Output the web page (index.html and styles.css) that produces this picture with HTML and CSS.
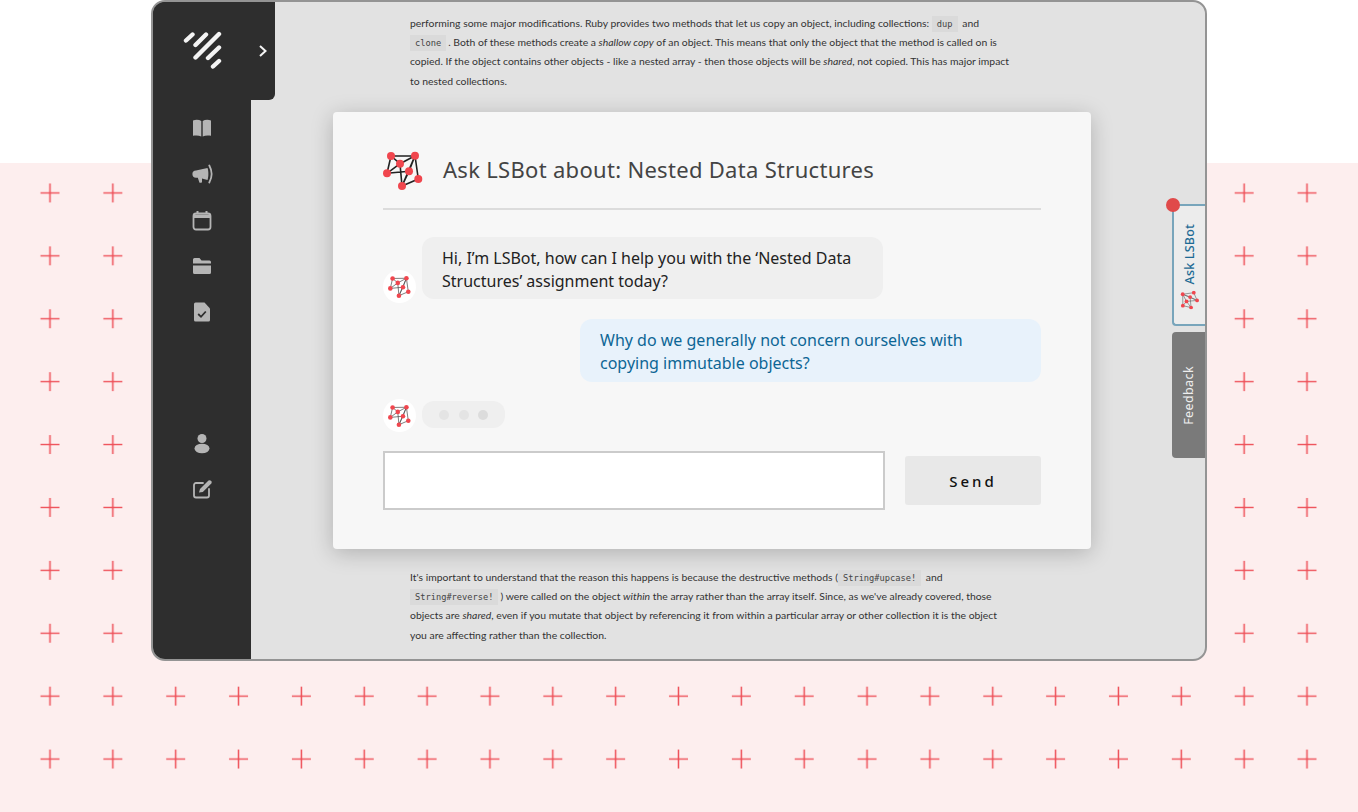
FILE: index.html
```html
<!DOCTYPE html>
<html lang="en">
<head>
    <meta charset="UTF-8">
    <meta name="viewport" content="width=device-width, initial-scale=1.0">
    <title>Ask LSBot</title>
    <link rel="stylesheet" href="styles.css">
</head>
<body>

<svg class="defs" width="0" height="0" aria-hidden="true">
    <symbol id="bot" viewBox="0 0 40 40">
        <g class="bot-lines">
            <path d="M8 6L32 5.7L35.3 29L19 36L17 13.7L32 5.7L26 21.3L19 36M32 5.7L19 36M8 6L4 23.3L17 13.7M8 6L17 13.7M4 23.3L26 21.3"/>
        </g>
        <g class="bot-nodes">
            <circle cx="8" cy="6" r="4"/>
            <circle cx="32" cy="5.7" r="4"/>
            <circle cx="17" cy="13.7" r="4"/>
            <circle cx="26" cy="21.3" r="4"/>
            <circle cx="4" cy="23.3" r="4"/>
            <circle cx="35.3" cy="29" r="4"/>
            <circle cx="19" cy="36" r="4"/>
        </g>
    </symbol>
</svg>

<div class="band">
    <svg class="crosses" width="100%" height="100%">
        <defs>
            <pattern id="cross" x="18.6" y="-1.5" width="62.85" height="62.9" patternUnits="userSpaceOnUse">
                <path d="M21.9 31.5H40.9M31.4 22V41" stroke="#fff" stroke-opacity="0.6" stroke-width="3.5" fill="none"/>
                <path d="M21.9 31.5H40.9M31.4 22V41" stroke="#ee5058" stroke-width="1.6" fill="none"/>
            </pattern>
        </defs>
        <rect width="100%" height="100%" fill="url(#cross)"/>
    </svg>
</div>

<div class="window">
    <aside class="sidebar">
        <div class="brand">
            <svg class="brand-logo" width="40" height="40" viewBox="0 0 40 40">
                <path d="M3 9.5L9.5 3.5M12.5 14L23 3.5M12.5 26.5L36 3M25 27L36 16.5M30 35.5L36 30"/>
            </svg>
            <svg class="brand-arrow" width="10" height="14" viewBox="0 0 10 14">
                <path d="M2 2L7.5 7L2 12"/>
            </svg>
        </div>
        <nav class="nav">
            <svg class="icon" viewBox="0 0 24 24"><path d="M3 4.5C6 3.5 9 3.7 11.3 5V20.5C9 19.3 6 19.1 3 19.8ZM21 4.5C18 3.5 15 3.7 12.7 5V20.5C15 19.3 18 19.1 21 19.8Z"/></svg>
            <svg class="icon" viewBox="0 0 24 24"><path d="M6 8.5L17.5 6C18.7 9 18.7 15 17.5 18L12 16.5V20Q11.5 21.2 9.5 20.7L7.8 15.7H6A3.6 3.6 0 0 1 6 8.5Z"/><path class="icon-line" d="M19.3 3.5Q24 12 19.3 20.5"/></svg>
            <svg class="icon" viewBox="0 0 24 24"><path class="icon-line" d="M6 5.5H18A2.5 2.5 0 0 1 20.5 8V19A2.5 2.5 0 0 1 18 21.5H6A2.5 2.5 0 0 1 3.5 19V8A2.5 2.5 0 0 1 6 5.5Z"/><path d="M3.5 6.5H20.5V10H3.5ZM6.5 3H8.5V6H6.5ZM15.5 3H17.5V6H15.5Z"/></svg>
            <svg class="icon" viewBox="0 0 24 24"><path d="M3 5.5Q3 4 4.5 4H9.5L11.5 6.5H19.5Q21 6.5 21 8V9.5H3ZM3 11.5H21V18.5Q21 20 19.5 20H4.5Q3 20 3 18.5Z"/></svg>
            <svg class="icon icon-file" viewBox="0 0 24 24"><path d="M5.5 2.5H14.5L20 8.5V20Q20 21.5 18.5 21.5H5.5Q4 21.5 4 20V4Q4 2.5 5.5 2.5Z"/><path class="icon-check" d="M8.2 14L11 16.8L15.8 11.5"/></svg>
        </nav>
        <nav class="nav nav-bottom">
            <svg class="icon" viewBox="0 0 24 24"><circle cx="12" cy="7.500" r="4.500"/><ellipse cx="12" cy="17.500" rx="7.500" ry="4.800"/></svg>
            <svg class="icon" viewBox="0 0 24 24"><path class="icon-line" d="M13 6H6A2 2 0 0 0 4 8V18.500A2 2 0 0 0 6 20.500H17A2 2 0 0 0 19 18.500V12"/><path d="M9 15.500L10 12L18.500 3.500Q19.500 2.800 20.500 3.500L21.500 4.500Q22 5.500 21.300 6.500L12.800 15Z"/></svg>
        </nav>
    </aside>

    <main class="content">
        <p class="lesson">performing some major modifications. Ruby provides two methods that let us copy an object, including collections: <code>dup</code> and<br>
        <code>clone</code>. Both of these methods create a <em>shallow copy</em> of an object. This means that only the object that the method is called on is<br>
        copied. If the object contains other objects - like a nested array - then those objects will be <em>shared</em>, not copied. This has major impact<br>
        to nested collections.</p>

        <section class="modal">
            <header class="modal-header">
                <svg class="modal-logo" width="40" height="40"><use href="#bot"/></svg>
                <h2 class="modal-title">Ask LSBot about: Nested Data Structures</h2>
            </header>

            <div class="chat">
                <div class="chat-row">
                    <span class="avatar"><svg width="23" height="23"><use href="#bot"/></svg></span>
                    <div class="bubble">Hi, I’m LSBot, how can I help you with the ‘Nested Data Structures’ assignment today?</div>
                </div>
                <div class="chat-row chat-row-user">
                    <div class="bubble bubble-user">Why do we generally not concern ourselves with copying immutable objects?</div>
                </div>
                <div class="chat-row">
                    <span class="avatar"><svg width="23" height="23"><use href="#bot"/></svg></span>
                    <div class="typing"><i></i><i></i><i></i></div>
                </div>
            </div>

            <form class="composer">
                <input class="composer-input" type="text" aria-label="Message">
                <button class="composer-send" type="button">Send</button>
            </form>
        </section>

        <p class="lesson lesson-after">It's important to understand that the reason this happens is because the destructive methods (<code>String#upcase!</code> and<br>
        <code>String#reverse!</code>) were called on the object <em>within</em> the array rather than the array itself. Since, as we've already covered, those<br>
        objects are <em>shared</em>, even if you mutate that object by referencing it from within a particular array or other collection it is the object<br>
        you are affecting rather than the collection.</p>
    </main>

    <div class="tabs">
        <span class="tabs-dot"></span>
        <div class="tab tab-ask">
            <span class="tab-label"><svg class="tab-bot" width="19" height="19"><use href="#bot"/></svg>Ask LSBot</span>
        </div>
        <div class="tab tab-feedback">
            <span class="tab-label">Feedback</span>
        </div>
    </div>
</div>

</body>
</html>
```

FILE: styles.css
```css
* {
    margin: 0;
    padding: 0;
    box-sizing: border-box;
}

body {
    position: relative;
    height: 812px;
    overflow: hidden;
    background: #fff;
    padding-top: 163px;
    font-family: 'Noto Sans', sans-serif;
}

.defs {
    position: absolute;
}

.bot-lines path {
    fill: none;
    stroke: var(--bot-line-color, #222);
    stroke-width: var(--bot-line, 1.6);
}

.bot-nodes circle {
    fill: #f0464e;
}

.band {
    height: 649px;
    background: #fdeeee;
}

.crosses {
    display: block;
}

.window {
    position: absolute;
    left: 151px;
    top: 0;
    width: 1056px;
    height: 661px;
    display: flex;
    background: #e2e2e2;
    border: 2px solid #949494;
    border-radius: 14px;
    overflow: hidden;
}

/* sidebar */
.sidebar {
    flex: 0 0 98px;
    width: 98px;
    min-width: 0;
    background: #2e2e2e;
}

.brand {
    position: relative;
    z-index: 1;
    width: 122px;
    height: 98px;
    background: #2e2e2e;
    border-bottom-right-radius: 6px;
    display: flex;
    align-items: flex-start;
    padding: 29px 0 0 30px;
}

.brand-logo {
    flex: none;
}

.brand-logo path {
    fill: none;
    stroke: #f4f4f4;
    stroke-width: 4.4;
    stroke-linecap: round;
}

.brand-arrow {
    flex: none;
    margin: 13px 0 0 35px;
}

.brand-arrow path {
    fill: none;
    stroke: #f4f4f4;
    stroke-width: 2;
}

.nav {
    display: flex;
    flex-direction: column;
    align-items: center;
    gap: 22.2px;
    padding: 15.5px 1px 0 0;
}

.nav-bottom {
    padding-top: 107px;
}

.icon {
    width: 24px;
    height: 24px;
    fill: #b5b5b5;
}

.icon-line {
    fill: none;
    stroke: #b5b5b5;
    stroke-width: 1.8;
    stroke-linecap: round;
}

.icon-check {
    fill: none;
    stroke: #2e2e2e;
    stroke-width: 1.8;
}

/* lesson text */
.content {
    flex: 1;
    min-width: 0;
    padding: 12px 0 0 82px;
}

.lesson {
    margin-left: 77px;
    font-family: 'Lato', sans-serif;
    font-size: 10.4px;
    line-height: 19.2px;
    color: #333;
    white-space: nowrap;
}

.lesson-after {
    margin-top: 19px;
}

.lesson code {
    font-family: 'DejaVu Sans Mono', monospace;
    font-size: 8.7px;
    line-height: 1;
    padding: 3px 5px;
    margin-right: 2px;
    background: #dadada;
    color: #444;
}

/* modal */
.modal {
    width: 758px;
    height: 437px;
    margin-top: 21.2px;
    padding: 38px 50px 0;
    background: #f7f7f7;
    border-radius: 4px;
    box-shadow: 0 4px 22px rgba(0, 0, 0, 0.22);
}

.modal-header {
    display: flex;
    align-items: center;
    gap: 20px;
    height: 60px;
    padding-bottom: 19px;
    border-bottom: 2px solid #dcdcdc;
}

.modal-title {
    margin-top: -2px;
    font-size: 22px;
    font-weight: 400;
    letter-spacing: 0.3px;
    color: #444;
}

.chat {
    display: flex;
    flex-direction: column;
    gap: 20px;
    margin-top: 27px;
}

.chat-row {
    display: flex;
    align-items: flex-end;
    gap: 6px;
}

.chat-row-user {
    justify-content: flex-end;
}

.avatar {
    --bot-line: 1.2;
    --bot-line-color: #444;
    flex: 0 0 33px;
    width: 33px;
    height: 33px;
    margin: -10px 0 -3.5px 0;
    display: flex;
    align-items: center;
    justify-content: center;
    background: #fff;
    border-radius: 50%;
}

.bubble {
    width: 461px;
    padding: 10px 20px 6px;
    font-size: 16px;
    line-height: 23px;
    color: #222;
    background: #efefef;
    border-radius: 12px;
}

.bubble-user {
    padding-bottom: 7px;
    margin-bottom: -1px;
    background: #e8f2fb;
    color: #0d6695;
}

.typing {
    display: flex;
    align-items: center;
    gap: 9.5px;
    width: 83px;
    height: 27px;
    padding-left: 17px;
    background: #efefef;
    border-radius: 12px;
}

.typing i {
    width: 10px;
    height: 10px;
    border-radius: 50%;
    background: #e4e4e4;
}

.typing i:last-child {
    background: #dcdcdc;
}

.composer {
    display: flex;
    align-items: center;
    justify-content: space-between;
    margin-top: 23px;
}

.composer-input {
    width: 502px;
    height: 59px;
    background: #fff;
    border: 2px solid #cbcbcb;
}

.composer-send {
    width: 136px;
    height: 49px;
    border: 0;
    border-radius: 3px;
    background: #e8e8e8;
    font-family: 'Noto Sans', sans-serif;
    font-size: 15px;
    font-weight: 500;
    letter-spacing: 3px;
    color: #111;
}

/* side tabs */
.tabs {
    position: absolute;
    top: 202px;
    right: 0;
    display: flex;
    flex-direction: column;
    gap: 6px;
    width: 33px;
}

.tabs-dot {
    position: absolute;
    top: -6px;
    left: -6px;
    width: 14px;
    height: 14px;
    border-radius: 50%;
    background: #e04a4a;
}

.tab {
    display: flex;
    align-items: center;
    justify-content: center;
    border-radius: 4px 0 0 4px;
}

.tab-ask {
    --bot-line: 1.2;
    --bot-line-color: #555;
    height: 122px;
    background: #ececec;
    border: 2px solid #78a5bb;
    border-right: 0;
    color: #1d6a94;
}

.tab-feedback {
    height: 126px;
    background: #7a7a7a;
    color: #eee;
}

.tab-label {
    display: flex;
    align-items: center;
    gap: 6px;
    writing-mode: vertical-rl;
    transform: rotate(180deg);
    font-size: 12.5px;
    letter-spacing: 0.4px;
}

.tab-ask .tab-label {
    margin-top: 4px;
    font-weight: 500;
    letter-spacing: 0.2px;
}

.tab-bot {
    transform: rotate(90deg);
}
```
